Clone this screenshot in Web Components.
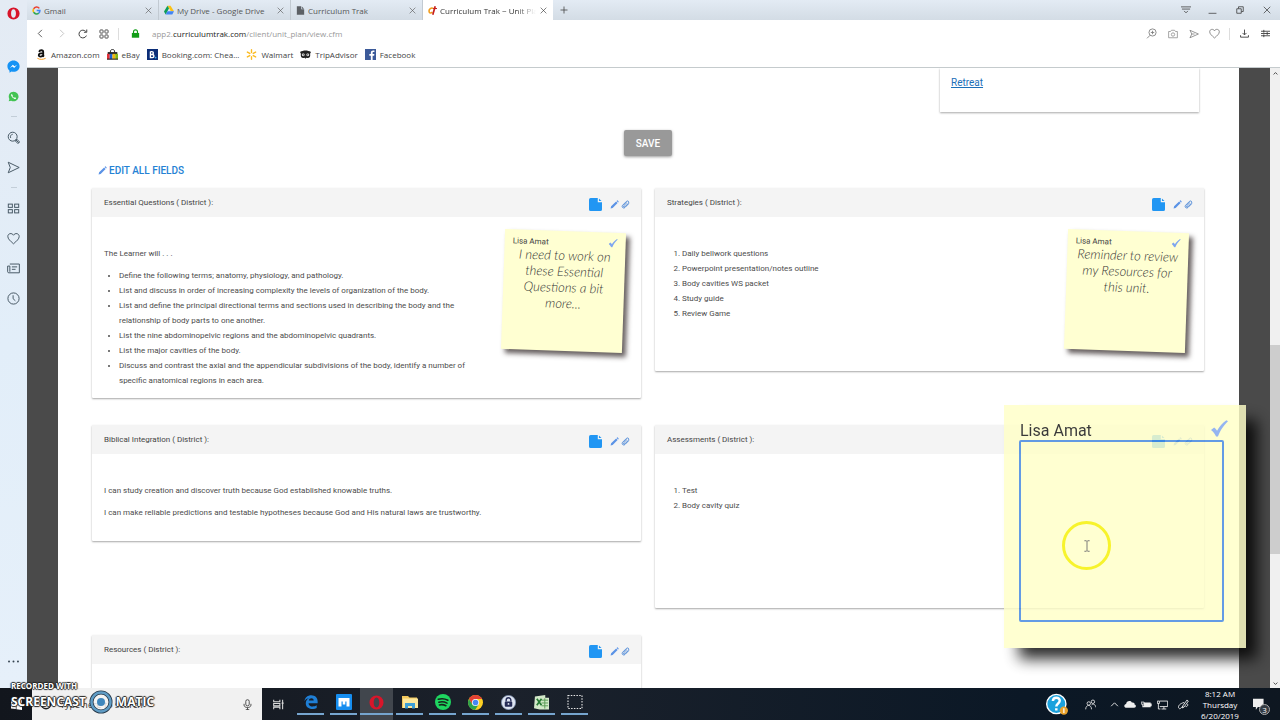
<!DOCTYPE html>
<html lang="en">
<head>
<meta charset="utf-8">
<title>Curriculum Trak ~ Unit Planner</title>
<style>
  html, body {
    height: 100%;
  }

  body {
    margin: 0;
    overflow: hidden;
    font-family: "Open Sans", "Noto Sans", sans-serif;
    font-size: 8px;
    color: #444;
  }
</style>
</head>
<body>
<desktop-screen></desktop-screen>

<script>
(function () {
  const icons = {
    opera: '<path fill="#d8152a" fill-rule="evenodd" d="M8 .5a7.5 7.5 0 1 0 0 15 7.5 7.5 0 0 0 0-15zm0 2.2c2 0 3 2.300 3 5.300s-1 5.300-3 5.300S5 11 5 8s1-5.300 3-5.300z"/>',
    messenger: '<path fill="#1593f5" d="M8 .6C3.700.6.5 3.700.5 7.700c0 2.200 1 4.100 2.600 5.400v2.500l2.400-1.300c.8.2 1.600.3 2.500.3 4.300 0 7.500-3 7.500-7S12.300.6 8 .6z"/><path fill="#fff" d="M3.500 9.800l3.700-4 2 1.900 3.300-1.900-3.700 4-2-1.900z"/>',
    whatsapp: '<path fill="#42c352" d="M8 1a7 7 0 0 0-6 10.500L1 15l3.700-1A7 7 0 1 0 8 1z"/><path fill="#fff" d="M5.600 4.300c-1 .3-1.400 1.500-.8 2.700 1 2.200 2.600 3.700 4.800 4.500 1.100.3 2-.4 2.200-1.400L10 9l-.9.900C8 9.400 7 8.500 6.400 7.200l.7-.8z"/>',
    find: '<g fill="none" stroke="#465764" stroke-width="1.200"><circle cx="7" cy="7" r="5.500"/><path d="M4.500 8.500A3.200 3.200 0 0 1 7 4M11 11l3.500 3.500M10 12l2-2 3.500 3.500-2 2z"/></g>',
    send: '<path fill="none" stroke="#465764" stroke-width="1.200" stroke-linejoin="round" d="M1.500 1.500L15 8 1.500 14.500 4 8z"/>',
    dial: '<g fill="none" stroke="#465764" stroke-width="1.200"><rect x="1.600" y="2.600" width="5" height="4"/><rect x="9.400" y="2.600" width="5" height="4"/><rect x="1.600" y="9.400" width="5" height="4"/><rect x="9.400" y="9.400" width="5" height="4"/></g>',
    heart: '<path fill="none" stroke="currentColor" stroke-width="1.200" d="M8 14.500C4 11 1 8.500 1 5.400 1 1.800 6 .5 8 4c2-3.500 7-2.200 7 1.400 0 3.100-3 5.600-7 9.100z"/>',
    news: '<path fill="none" stroke="#465764" stroke-width="1.200" d="M3.500 2.500h11.700v10.800H2.200C1.300 13.300.8 12.600.8 12V5h2.700v7M6 6h6.500M6 9h4.500"/>',
    clock: '<g fill="none" stroke="#465764" stroke-width="1.200"><circle cx="8" cy="8" r="6.900"/><path d="M7.500 4v4.300l2.800 2.500"/></g>',
    more: '<g fill="#354450"><circle cx="2.500" cy="8" r="1.200"/><circle cx="8" cy="8" r="1.200"/><circle cx="13.500" cy="8" r="1.200"/></g>',
    google: '<g fill="none" stroke-width="2.800"><path stroke="#ea4335" d="M13 4.200A6 6 0 0 0 2.900 5"/><path stroke="#fbbc05" d="M2.900 5a6 6 0 0 0 0 6"/><path stroke="#34a853" d="M2.900 11a6 6 0 0 0 9.100 1.700"/><path stroke="#4285f4" d="M12 12.700A6 6 0 0 0 14 8H8.300"/></g>',
    drive: '<path fill="#fbc215" d="M5.500 1h5L16 10h-5z"/><path fill="#0c9d58" d="M5.500 1L8 5.300 2.700 15 0 10.400z"/><path fill="#4285f4" d="M5.500 10H16l-2.700 5H2.700z"/>',
    page: '<path fill="#5c6065" d="M1.500.5h7.700v5.300h5.300v9.700h-13z"/><path fill="#5c6065" d="M10.300.8l4 4h-4z"/>',
    trak: '<path fill="none" stroke="#f09a1a" stroke-width="2.800" d="M9.500 4.200C5.500 2.200 1.800 5.500 1.800 9c0 3.800 3.200 4.500 6 2"/><path fill="none" stroke="#c61f1f" stroke-width="3" d="M12.800.5L8.500 15.500"/><path stroke="#c61f1f" stroke-width="1.800" d="M9 4.500h7"/>',
    close: '<path fill="none" stroke="currentColor" stroke-width="1.400" d="M1.500 1.500l13 13M14.500 1.500l-13 13"/>',
    plus: '<path stroke="#444" stroke-width="1.600" d="M8 1v14M1 8h14"/>',
    tabmenu: '<path fill="none" stroke="#444" stroke-width="1.300" d="M0 3h16M1.500 6.500h13M5 9.500l3 3 3-3"/>',
    minimise: '<path stroke="#444" stroke-width="1.400" d="M1 13h14"/>',
    restore: '<path fill="none" stroke="#333" stroke-width="1.500" d="M1.500 5.500h9v9h-9zM5 5V1.500h9.500V11H11"/>',
    back: '<path fill="none" stroke="#444" stroke-width="1.500" d="M10.500 1.500L4 8l6.500 6.500"/>',
    forward: '<path fill="none" stroke="#bbb" stroke-width="1.500" d="M5.500 1.500L12 8l-6.500 6.500"/>',
    reload: '<path fill="none" stroke="#444" stroke-width="1.600" d="M13.500 10.500A6.200 6.200 0 1 1 12.500 4M14 .8v4.400H9.500"/>',
    speed: '<g fill="none" stroke="#444" stroke-width="1.500"><rect x="1.500" y="1.500" width="5" height="5" rx="1"/><rect x="9.500" y="1.500" width="5" height="5" rx="1"/><rect x="1.500" y="9.500" width="5" height="5" rx="1"/><rect x="9.500" y="9.500" width="5" height="5" rx="1"/></g>',
    lock: '<path fill="#119d16" d="M1.500 7h13v8.500h-13z"/><path fill="none" stroke="#119d16" stroke-width="2" d="M4.500 7V5a3.500 3.500 0 0 1 7 0v2"/>',
    zoom: '<g fill="none" stroke="#777" stroke-width="1.200"><circle cx="9.500" cy="6.500" r="5.200"/><path d="M6 10.500L1.500 15M7 6.500h5M9.500 4v5"/></g>',
    camera: '<g fill="none" stroke="#888" stroke-width="1.200"><path d="M1 4h3l1.500-2h5L12 4h3v10H1z"/><circle cx="8" cy="8.800" r="2.700"/></g>',
    plane: '<path fill="none" stroke="#777" stroke-width="1.200" d="M1.500 2L15 8 1.500 14l3-6zM4.500 8H9"/>',
    download: '<path fill="none" stroke="#333" stroke-width="1.500" d="M8 1v9M4.500 7L8 10.500 11.500 7M1 11v3.500h14V11"/>',
    tune: '<path fill="none" stroke="#333" stroke-width="1.500" d="M0 4h16M0 8h16M0 12h16M5 1.500v5M11 5.500v5M5 9.500v5"/>',
    amazon: '<path fill="none" stroke="#111" stroke-width="2.600" d="M4.500 4.200C5.500 1 10.500 1 10.500 4.500V9c0 1 .5 1.500 1.200 2M10.500 6C6 6 4 7 4 9c0 3 5.500 2.500 6.500-.5"/><path fill="none" stroke="#f79a1c" stroke-width="1.400" d="M2 13.500c4 2.200 8 2 12 0"/>',
    ebay: '<path fill="none" stroke="#222" stroke-width="1.400" d="M5 5V3c0-3 6-3 6 0v2"/><path fill="#222" d="M1 4.500h14V8H1z"/><path fill="#e43137" d="M0 7h4v8H0z"/><path fill="#1d62d1" d="M4 7h4v8H4z"/><path fill="#f3b50d" d="M8 7h4v8H8z"/><path fill="#85b716" d="M12 7h4v8h-4z"/><path fill="#222" d="M0 14h16v1.500H0z"/>',
    booking: '<rect width="16" height="16" fill="#0b2d77"/><path fill="none" stroke="#fff" stroke-width="2" d="M5 3.500v9h2.500c3.500 0 3.500-4.500 0-4.500H5h2c3 0 3-4.200 0-4.200H5"/><circle cx="12.500" cy="12.500" r="1.300" fill="#3bb6f2"/>',
    walmart: '<path stroke="#fbbb22" stroke-width="2" stroke-linecap="round" d="M8 1v4M8 11v4M2 4.500l3.500 2M10.500 9.500l3.500 2M2 11.500l3.500-2M10.500 6.500l3.500-2"/>',
    trip: '<path fill="#222" d="M0 4.500C5 1.500 11 1.500 16 4.500l-1.200 2V10a3.700 3.700 0 0 1-5.500 2.600L8 14l-1.300-1.400A3.700 3.700 0 0 1 1.200 10V6.500z"/><circle cx="4.700" cy="8.500" r="2" fill="#fff"/><circle cx="11.300" cy="8.500" r="2" fill="#fff"/><circle cx="4.700" cy="8.500" r=".9"/><circle cx="11.300" cy="8.500" r=".9"/>',
    facebook: '<rect width="16" height="16" fill="#3c5a99"/><path fill="#fff" d="M8.500 16V9.800H6.300V7.300h2.200V5.500c0-2.200 1.300-3.400 3.300-3.400l1.900.1v2.300h-1.300c-1 0-1.300.5-1.300 1.200v1.600h2.500l-.3 2.500h-2.200V16z"/>',
    sticky: '<path fill="#2196f3" d="M2 0h8.800v5.200H16V14a2 2 0 0 1-2 2H2a2 2 0 0 1-2-2V2a2 2 0 0 1 2-2z"/><path fill="#2196f3" d="M12.200.6l3.200 3.200h-3.200z"/>',
    pencil: '<path fill="#5b93e6" d="M1 15l1-3.700 8.800-8.800 2.700 2.700L4.700 14zM11.700 1.600l.9-.9c.7-.7 3.400 2 2.700 2.700l-.9.900z"/>',
    clip: '<path fill="none" stroke="#4a86d6" stroke-width="1.700" d="M13.800 6.500l-6.500 6.600C4 16 .2 12.300 3 9.200l6.600-6.700c2.500-2.200 5.700.8 3.500 3.300l-6.200 6.300c-1.500 1.200-3.200-.4-2-2L10.500 4.500"/>',
    check: '<path fill="#7ea6ef" d="M0 9.500l3-2.500c1.200.8 2 1.800 2.700 3C8 6 10.500 3 14.500.2L16 1.200C11.500 5.500 9 9.500 6.500 15.500H4.800C3.500 12.800 2 11 0 9.500z"/>',
    ibeam: '<path fill="none" stroke="#777" stroke-width="1.300" d="M4.500 1h2.700L8 2l.8-1h2.700M8 2v12M4.500 15h2.700L8 14l.8 1h2.700"/>',
    up: '<path fill="none" stroke="#444" stroke-width="3" d="M2 11l6-6 6 6"/>',
    down: '<path fill="none" stroke="#444" stroke-width="3" d="M2 5l6 6 6-6"/>',
    windows: '<path fill="#fff" d="M0 2.300L7 1.300V7.500H0zM8 1.200L16 0v7.500H8zM0 8.500h7v6.200l-7-1zM8 8.500h8V16l-8-1.200z"/>',
    cortana: '<circle cx="8" cy="8" r="6.300" fill="none" stroke="#222" stroke-width="2"/>',
    mic: '<rect x="5.500" y="1" width="5" height="9" rx="2.500" fill="none" stroke="#333" stroke-width="1.200"/><path fill="none" stroke="#333" stroke-width="1.200" d="M3 7v2c0 4.500 10 4.500 10 0V7M8 12.500V15.500M5.500 15.500h5"/>',
    taskview: '<path fill="none" stroke="#ddd" stroke-width="1.500" d="M1 1v3h9V1M1 15v-3h9v3M1 6.500h9v3.500H1zM14 1v14M12.500 6h3"/>',
    edge: '<path fill="#1f7fd6" d="M.5 7C1.300 2.700 4.300.3 8.300.3c4.700 0 7.300 3.200 7.300 7v2H5.200c0 4.300 6 4.800 9.300 2.500v3c-5.500 2.900-12.500.7-12.500-5.300 0-3 1.800-5 4-6C3.500 4 1.500 5.200.5 7zm5-.6h5.600C11.100 2.700 6 2.700 5.500 6.400z"/>',
    maxthon: '<rect width="16" height="16" rx="1" fill="#168ef0"/><path fill="#fff" d="M2.500 4h11v8.500h-3V7.500H9.300v3H6.700v-3H5.500v5h-3z"/>',
    explorer: '<path fill="#f1c75c" d="M0 2h6l1.500 1.500H15V14H0z"/><path fill="#fce79c" d="M1 4.500h15V14H1z"/><path fill="#3d9fd6" d="M3 14.500V9h10v5.500h-3V12H6v2.500z"/>',
    spotify: '<circle cx="8" cy="8" r="8" fill="#1ed760"/><path fill="none" stroke="#17251c" stroke-width="1.600" stroke-linecap="round" d="M3.300 5.300c3.400-1 6.700-.6 9.600.9M3.900 8.200c2.800-.8 5.600-.4 8.100.9M4.400 10.900c2.200-.6 4.500-.3 6.500.8"/>',
    chrome: '<circle cx="8" cy="8" r="8" fill="#fdd023"/><path fill="#e44134" d="M1 4.200A8 8 0 0 1 15 4.200H8L4.600 10z"/><path fill="#2ba24c" d="M1 4.200A8 8 0 0 0 7.500 16L11.400 10 4.600 10z"/><circle cx="8" cy="8" r="3.800" fill="#fff"/><circle cx="8" cy="8" r="3" fill="#4587f3"/>',
    keylock: '<circle cx="8" cy="8" r="7.600" fill="#dfe6f2" stroke="#7c8eae" stroke-width=".8"/><rect x="4" y="7" width="8" height="5.500" rx="1" fill="#262c56"/><path fill="none" stroke="#262c56" stroke-width="1.500" d="M5.500 7V5.500a2.500 2.500 0 0 1 5 0V7"/><circle cx="8" cy="9.500" r="1" fill="#dfe6f2"/>',
    excel: '<path fill="#d3e9c9" d="M1 1.500L12 0v3h4v12.500H6L0 14z"/><path stroke="#5a9c55" fill="none" d="M8 5.500h7M8 8.500h7M8 11.500h7M11.500 3.500v11"/><path fill="none" stroke="#277b34" stroke-width="1.800" d="M3 4l5 7M8 4l-5 7"/>',
    region: '<rect x="1" y="1.500" width="14" height="13" fill="none" stroke="#e8e8e8" stroke-width="1.100" stroke-dasharray="1.500 1.300"/>',
    help: '<circle cx="7.500" cy="8" r="7" fill="#1ba1dd" stroke="#fff" stroke-width="1"/><path fill="none" stroke="#fff" stroke-width="1.800" d="M5 5.800C5.200 2.700 10 2.800 10 5.700c0 2-2.500 1.900-2.500 4.200M7.500 11v1.800"/><circle cx="13" cy="12.800" r="3" fill="#e9a22c"/><path stroke="#fff" stroke-width=".9" d="M13 11v3.600"/>',
    people: '<g fill="none" stroke="#eee" stroke-width="1.200"><circle cx="5.500" cy="6.500" r="2.500"/><circle cx="11.500" cy="4" r="2.500"/><path d="M1 15c0-7.500 8.500-7.500 8.500 0M9.500 8.500c3-2.500 6 0 6 3.500"/></g>',
    chevron: '<path fill="none" stroke="#eee" stroke-width="1.600" d="M2 11l6-6 6 6"/>',
    cloud: '<path fill="#eee" d="M3.500 13C-.5 13-.5 8.500 2.800 8 3 4 8.500 2.500 10.500 6c3-.7 4 1.500 3.500 2.500 2.700.5 2.500 4.500-.5 4.500z"/>',
    battery: '<path fill="#eee" d="M4 5h10v1.500h1.500v4H14V12H3V9.500h1.500z"/><path fill="none" stroke="#eee" stroke-width="1.200" d="M0 4.500h4.500v3h-4zM2.500 7.500V12"/>',
    network: '<path fill="none" stroke="#eee" stroke-width="1.300" d="M4 3h11.500v8H4M10 11v3.500M6.500 14.500h7M.5 3h3v3.500h-3zM2 6.500v8h3"/>',
    pen: '<path fill="none" stroke="#eee" stroke-width="1.300" d="M7 10l6-8.500 2 1.500-6 8.500-3 1.500zM9 5C1 7-1 12 2 14c3 1 3-5 6-2M13 7c3 1 0 5-2 4"/>',
    notify: '<path fill="#eee" d="M0 1h13v10H6l-2.500 3.500V11H0z"/>'
  };

  function define(name, css, html) {
    const template = document.createElement('template');
    template.innerHTML = `<style>* { box-sizing: border-box; } ${css}</style>${html}`;
    customElements.define(name, class extends HTMLElement {
      constructor() {
        super();
        this.attachShadow({ mode: 'open' }).appendChild(template.content.cloneNode(true));
      }
    });
  }

  customElements.define('ui-icon', class extends HTMLElement {
    static get observedAttributes() {
      return ['name', 'size'];
    }

    constructor() {
      super();
      this.attachShadow({ mode: 'open' });
    }

    attributeChangedCallback() {
      const size = this.getAttribute('size') || 10;
      this.shadowRoot.innerHTML = `
        <style>
          :host { display: inline-flex; flex: none; }
          svg { display: block; width: ${size}px; height: ${size}px; }
        </style>
        <svg viewBox="0 0 16 16" aria-hidden="true">${icons[this.getAttribute('name')] || ''}</svg>`;
    }
  });

  /* Browser chrome */

  const plainButton = `
    button {
      display: flex;
      align-items: center;
      justify-content: center;
      padding: 0;
      border: 0;
      background: none;
      color: inherit;
      font: inherit;
    }`;

  define('side-bar', `
    :host {
      display: flex;
      flex-direction: column;
      align-items: center;
      background: linear-gradient(#e4ebf4, #e2eef9 50%, #e6f0fa);
      color: #465764;
    }
    ${plainButton}
    button { width: 27px; height: 30px; }
    .logo { height: 27px; margin-bottom: 24px; }
    hr { width: 6px; margin: 5px 0; border: 0; border-top: 1px solid #c3ced8; }
    .more { margin-top: auto; margin-bottom: 12px; }
  `, `
    <button class="logo" aria-label="Opera menu"><ui-icon name="opera" size="13"></ui-icon></button>
    <button aria-label="Messenger"><ui-icon name="messenger" size="13"></ui-icon></button>
    <button aria-label="WhatsApp"><ui-icon name="whatsapp" size="11"></ui-icon></button>
    <hr>
    <button aria-label="Search"><ui-icon name="find" size="13"></ui-icon></button>
    <button aria-label="My Flow"><ui-icon name="send" size="13"></ui-icon></button>
    <hr>
    <button aria-label="Speed Dial"><ui-icon name="dial" size="13"></ui-icon></button>
    <button aria-label="Bookmarks"><ui-icon name="heart" size="13"></ui-icon></button>
    <button aria-label="News"><ui-icon name="news" size="13"></ui-icon></button>
    <button aria-label="History"><ui-icon name="clock" size="13"></ui-icon></button>
    <button class="more" aria-label="More"><ui-icon name="more" size="13"></ui-icon></button>
  `);

  define('browser-tab', `
    :host {
      display: flex;
      align-items: center;
      gap: 3px;
      width: 132px;
      padding: 0 6px 0 5px;
      border-right: 1px solid #c2cad2;
      color: #555;
    }
    :host([active]) { background: #fff; border: 0; color: #333; width: 130px; }
    ${plainButton}
    span { flex: 1; overflow: hidden; white-space: nowrap; }
    :host([active]) span {
      -webkit-mask-image: linear-gradient(90deg, #000 80%, transparent);
      mask-image: linear-gradient(90deg, #000 80%, transparent);
    }
    button { width: 8px; height: 12px; }
  `, `
    <slot name="icon"></slot>
    <span><slot></slot></span>
    <button aria-label="Close tab"><ui-icon name="close" size="7"></ui-icon></button>
  `);

  define('tab-strip', `
    :host {
      display: flex;
      height: 20px;
      background: linear-gradient(#e3ebf4, #d3dce5);
    }
    ${plainButton}
    .add { width: 22px; }
    .controls { display: flex; margin-left: auto; color: #333; }
    .controls button { width: 27px; }
  `, `
    <slot></slot>
    <button class="add" aria-label="New tab"><ui-icon name="plus" size="8"></ui-icon></button>
    <div class="controls">
      <button aria-label="Tab menu"><ui-icon name="tabmenu" size="10"></ui-icon></button>
      <button aria-label="Minimise"><ui-icon name="minimise" size="9"></ui-icon></button>
      <button aria-label="Restore"><ui-icon name="restore" size="8"></ui-icon></button>
      <button aria-label="Close"><ui-icon name="close" size="8"></ui-icon></button>
    </div>
  `);

  define('address-bar', `
    :host {
      display: flex;
      align-items: center;
      height: 27px;
      padding: 0 4px 0 3px;
      background: #fff;
      color: #777;
    }
    ${plainButton}
    button { width: 21px; height: 21px; }
    i { width: 1px; height: 12px; margin: 0 4px; background: #ddd; }
    .lock { margin: 0 12px 0 8px; }
    .url { flex: 1; color: #999; }
    .url b { font-weight: 400; color: #222; }
  `, `
    <button aria-label="Back"><ui-icon name="back" size="9"></ui-icon></button>
    <button aria-label="Forward"><ui-icon name="forward" size="9"></ui-icon></button>
    <button aria-label="Reload"><ui-icon name="reload" size="10"></ui-icon></button>
    <button aria-label="Speed Dial"><ui-icon name="speed" size="10"></ui-icon></button>
    <i></i>
    <ui-icon class="lock" name="lock" size="9"></ui-icon>
    <span class="url">app2.<b>curriculumtrak.com</b>/client/unit_plan/view.cfm</span>
    <button aria-label="Zoom"><ui-icon name="zoom" size="11"></ui-icon></button>
    <button aria-label="Snapshot"><ui-icon name="camera" size="10"></ui-icon></button>
    <button aria-label="Send"><ui-icon name="plane" size="10"></ui-icon></button>
    <button aria-label="Bookmark"><ui-icon name="heart" size="11"></ui-icon></button>
    <i></i>
    <button aria-label="Downloads"><ui-icon name="download" size="9"></ui-icon></button>
    <button aria-label="Easy setup"><ui-icon name="tune" size="9"></ui-icon></button>
  `);

  define('bookmark-bar', `
    :host {
      display: flex;
      align-items: center;
      gap: 7px;
      height: 21px;
      padding: 0 9px 6px;
      border-bottom: 1px solid #c5cbcd;
      background: #fff;
    }
    a {
      display: flex;
      align-items: center;
      gap: 4px;
      color: #444;
      text-decoration: none;
      white-space: nowrap;
    }
  `, `
    <a href="#amazon"><ui-icon name="amazon" size="11"></ui-icon>Amazon.com</a>
    <a href="#ebay"><ui-icon name="ebay" size="11"></ui-icon>eBay</a>
    <a href="#booking"><ui-icon name="booking" size="11"></ui-icon>Booking.com: Chea...</a>
    <a href="#walmart"><ui-icon name="walmart" size="11"></ui-icon>Walmart</a>
    <a href="#tripadvisor"><ui-icon name="trip" size="11"></ui-icon>TripAdvisor</a>
    <a href="#facebook"><ui-icon name="facebook" size="11"></ui-icon>Facebook</a>
  `);

  define('scroll-bar', `
    :host {
      display: grid;
      grid-template-rows: 10px 267fr 209fr 124fr 10px;
      justify-items: stretch;
      width: 10px;
      background: #f0f0f0;
    }
    ui-icon { justify-self: center; align-self: center; }
    .thumb { grid-row: 3; background: #cdcdcd; }
    .end { grid-row: 5; }
  `, `
    <ui-icon name="up" size="5"></ui-icon>
    <div class="thumb"></div>
    <ui-icon class="end" name="down" size="5"></ui-icon>
  `);

  /* Unit plan page */

  define('unit-card', `
    :host {
      display: block;
      background: #fff;
      border-radius: 1px;
      box-shadow: 0 1px 2px rgba(0, 0, 0, .35);
    }
    header {
      display: flex;
      align-items: center;
      height: 29px;
      padding: 0 10px 0 12px;
      background: #f4f4f4;
      color: #444;
    }
    h2 { flex: 1; margin: 0; font: inherit; }
    ${plainButton}
    button { height: 14px; padding: 0 1px; }
    header button:first-of-type { margin-right: 6px; }
    .tools { display: flex; align-items: center; padding-top: 4px; }
    .body { display: flex; min-height: 87px; }
    :host([tall]) .body { min-height: 154px; }
    .text { flex: 1; padding: 29px 11px 10px 12px; }
    ::slotted(sticky-note) { margin: 14px 17px 20px 0; }
  `, `
    <header>
      <h2><slot name="title"></slot></h2>
      <div class="tools">
        <button aria-label="Add note"><ui-icon name="sticky" size="13"></ui-icon></button>
        <button aria-label="Edit"><ui-icon name="pencil" size="9"></ui-icon></button>
        <button aria-label="Attach"><ui-icon name="clip" size="9"></ui-icon></button>
      </div>
    </header>
    <div class="body">
      <div class="text"><slot></slot></div>
      <slot name="note"></slot>
    </div>
  `);

  define('sticky-note', `
    :host {
      display: block;
      flex: none;
      width: 121px;
      height: 120px;
      padding: 6px 8px;
      background: #ffffd2;
      box-shadow: 4px 4px 5px rgba(40, 30, 30, .7);
      transform: rotate(2deg);
    }
    .top { display: flex; justify-content: space-between; height: 10px; line-height: 12px; color: #444; }
    p {
      margin: 0;
      font: italic 300 13px/16px Lato, sans-serif;
      color: #333;
      text-align: center;
    }
  `, `
    <div class="top"><slot name="author"></slot><ui-icon name="check" size="9"></ui-icon></div>
    <p><slot></slot></p>
  `);

  define('note-editor', `
    :host {
      display: flex;
      flex-direction: column;
      width: 242px;
      height: 243px;
      padding: 15px 22px 26px 15px;
      background: #ffffc8;
      box-shadow: 13px 13px 14px -2px #000;
      opacity: .82;
      color: #111;
      font-size: 16px;
    }
    .top { display: flex; justify-content: space-between; height: 20px; margin-right: -4px; padding-left: 1px; line-height: 22px; }
    textarea {
      flex: 1;
      border: 2px solid #4286e0;
      border-radius: 2px;
      background: none;
      outline: none;
      resize: none;
      font: italic 300 24px/32px Lato, sans-serif;
    }
  `, `
    <div class="top"><label for="note"><slot></slot></label><ui-icon name="check" size="17"></ui-icon></div>
    <textarea id="note"></textarea>
  `);

  define('click-ring', `
    :host {
      display: flex;
      align-items: center;
      justify-content: center;
      width: 49px;
      height: 49px;
      border: 3px solid #f7f32c;
      border-radius: 50%;
    }
  `, `<ui-icon name="ibeam" size="12"></ui-icon>`);

  define('unit-plan', `
    :host {
      display: block;
      position: relative;
      overflow: hidden;
      padding: 0 31px;
      background: #4a4a4a;
      font-family: Roboto, sans-serif;
      font-size: 8px;
      line-height: 15px;
      color: #4c4c4c;
    }
    .sheet { min-height: 100%; padding: 0 35px 0 34px; background: #fff; }
    .links {
      width: 259px;
      height: 44px;
      margin: 0 5px 18px auto;
      padding: 7px 11px;
      box-shadow: 0 1px 2px rgba(0, 0, 0, .35);
      font-size: 10px;
    }
    .links a { color: #1c6fb8; }
    .save {
      display: block;
      width: 48px;
      height: 26px;
      margin: 0 auto;
      padding: 0;
      border: 0;
      border-radius: 2px;
      background: #999;
      box-shadow: 0 1px 3px rgba(0, 0, 0, .4);
      color: #fff;
      font: 500 10px Roboto, sans-serif;
    }
    .edit {
      display: flex;
      align-items: center;
      gap: 2px;
      width: fit-content;
      margin: 7px 0 10px 6px;
      color: #2582d4;
      font-size: 10px;
      font-weight: 500;
      text-decoration: none;
    }
    .cards {
      display: grid;
      grid-template-columns: 1fr 1fr;
      gap: 27px 14px;
      align-items: start;
    }
    p { margin: 0 0 7px; }
    ul, ol { margin: 0; padding-left: 15px; }
    note-editor { position: absolute; top: 337px; right: 24px; }
    click-ring { position: absolute; top: 453px; right: 159px; }
  `, `
    <div class="sheet">
      <div class="links"><a href="#retreat">Retreat</a></div>
      <button class="save">SAVE</button>
      <a class="edit" href="#edit"><ui-icon name="pencil" size="9"></ui-icon>EDIT ALL FIELDS</a>
      <div class="cards">
        <unit-card>
          <span slot="title">Essential Questions ( District ):</span>
          <p>The Learner will . . .</p>
          <ul>
            <li>Define the following terms; anatomy, physiology, and pathology.</li>
            <li>List and discuss in order of increasing complexity the levels of organization of the body.</li>
            <li>List and define the principal directional terms and sections used in describing the body and the relationship of body parts to one another.</li>
            <li>List the nine abdominopelvic regions and the abdominopelvic quadrants.</li>
            <li>List the major cavities of the body.</li>
            <li>Discuss and contrast the axial and the appendicular subdivisions of the body, identify a number of specific anatomical regions in each area.</li>
          </ul>
          <sticky-note slot="note"><span slot="author">Lisa Amat</span>I need to work on these Essential Questions a bit more...</sticky-note>
        </unit-card>
        <unit-card>
          <span slot="title">Strategies ( District ):</span>
          <ol>
            <li>Daily bellwork questions</li>
            <li>Powerpoint presentation/notes outline</li>
            <li>Body cavities WS packet</li>
            <li>Study guide</li>
            <li>Review Game</li>
          </ol>
          <sticky-note slot="note"><span slot="author">Lisa Amat</span>Reminder to review my Resources for this unit.</sticky-note>
        </unit-card>
        <unit-card>
          <span slot="title">Biblical Integration ( District ):</span>
          <p>I can study creation and discover truth because God established knowable truths.</p>
          <p>I can make reliable predictions and testable hypotheses because God and His natural laws are trustworthy.</p>
        </unit-card>
        <unit-card tall>
          <span slot="title">Assessments ( District ):</span>
          <ol>
            <li>Test</li>
            <li>Body cavity quiz</li>
          </ol>
        </unit-card>
        <unit-card>
          <span slot="title">Resources ( District ):</span>
        </unit-card>
      </div>
    </div>
    <note-editor>Lisa Amat</note-editor>
    <click-ring></click-ring>
  `);

  /* Windows task bar */

  define('task-bar', `
    :host {
      display: flex;
      height: 32px;
      background: linear-gradient(90deg, #12161d, #1b212b 40%, #0b1826 80%, #0e1721);
      color: #fff;
    }
    ${plainButton}
    .start, .view { width: 32px; }
    .search {
      display: flex;
      align-items: center;
      gap: 8px;
      width: 230px;
      padding: 0 9px 0 8px;
      background: #f1f1f1;
    }
    input {
      flex: 1;
      min-width: 0;
      padding: 0;
      border: 0;
      background: none;
      font: 9px "Open Sans", sans-serif;
    }
    input::placeholder { color: #333; }
    .apps button { width: 33px; position: relative; }
    .apps, .tray { display: flex; }
    .apps button::after {
      content: "";
      position: absolute;
      left: 3px;
      right: 3px;
      bottom: 5px;
      height: 2px;
      background: #76a5cf;
    }
    .apps .on { background: #41464d; }
    .apps .on::after { left: 0; right: 0; }
    .apps button { padding-bottom: 4px; }
    .tray { margin-left: auto; align-items: center; padding-right: 8px; }
    .tray button { width: 16px; height: 32px; }
    .tray .help { width: 34px; }
    .tray .people { width: 32px; }
    .tray .wide { width: 26px; }
    time { width: 48px; font-size: 8px; line-height: 11px; text-align: center; }
    .notify { position: relative; margin-left: 2px; }
    .notify span {
      position: absolute;
      right: 2px;
      bottom: 5px;
      width: 11px;
      height: 11px;
      border: 1px solid #aaa;
      border-radius: 50%;
      background: #333a42;
      font-size: 8px;
      line-height: 9px;
    }
  `, `
    <button class="start" aria-label="Start"><ui-icon name="windows" size="11"></ui-icon></button>
    <label class="search">
      <ui-icon name="cortana" size="12"></ui-icon>
      <input type="text" aria-label="Search" placeholder="Type here to search">
      <ui-icon name="mic" size="11"></ui-icon>
    </label>
    <button class="view" aria-label="Task view"><ui-icon name="taskview" size="11"></ui-icon></button>
    <div class="apps">
      <button aria-label="Edge"><ui-icon name="edge" size="14"></ui-icon></button>
      <button aria-label="Maxthon"><ui-icon name="maxthon" size="16"></ui-icon></button>
      <button class="on" aria-label="Opera"><ui-icon name="opera" size="15"></ui-icon></button>
      <button aria-label="File Explorer"><ui-icon name="explorer" size="16"></ui-icon></button>
      <button aria-label="Spotify"><ui-icon name="spotify" size="16"></ui-icon></button>
      <button aria-label="Chrome"><ui-icon name="chrome" size="15"></ui-icon></button>
      <button aria-label="Password manager"><ui-icon name="keylock" size="15"></ui-icon></button>
      <button aria-label="Excel"><ui-icon name="excel" size="15"></ui-icon></button>
      <button aria-label="Recorder"><ui-icon name="region" size="16"></ui-icon></button>
    </div>
    <div class="tray">
      <button class="help" aria-label="Help"><ui-icon name="help" size="22"></ui-icon></button>
      <button class="people" aria-label="People"><ui-icon name="people" size="11"></ui-icon></button>
      <button aria-label="Hidden icons"><ui-icon name="chevron" size="9"></ui-icon></button>
      <button aria-label="OneDrive"><ui-icon name="cloud" size="12"></ui-icon></button>
      <button aria-label="Battery"><ui-icon name="battery" size="11"></ui-icon></button>
      <button aria-label="Network"><ui-icon name="network" size="11"></ui-icon></button>
      <button class="wide" aria-label="Ink workspace"><ui-icon name="pen" size="11"></ui-icon></button>
      <time>8:12 AM<br>Thursday<br>6/20/2019</time>
      <button class="wide notify" aria-label="Notifications"><ui-icon name="notify" size="13"></ui-icon><span>3</span></button>
    </div>
  `);

  define('recorder-mark', `
    :host {
      display: block;
      color: #fff;
      font-family: "Open Sans", sans-serif;
      font-weight: 700;
      text-shadow: 1px 0 1px #222, -1px 0 1px #222, 0 1px 1px #222, 0 -1px 1px #222;
      white-space: nowrap;
    }
    small { display: block; font-size: 8px; line-height: 8px; }
    div { display: flex; align-items: center; gap: 3px; font-size: 12px; line-height: 22px; }
    svg { width: 24px; height: 24px; }
  `, `
    <small>RECORDED WITH</small>
    <div>
      <span>SCREENCAST</span>
      <svg viewBox="0 0 24 24" aria-hidden="true">
        <circle cx="12" cy="12" r="9.500" fill="#f5f5f5" fill-opacity=".8" stroke="#27394a" stroke-width="4"/>
        <circle cx="12" cy="12" r="9.500" fill="none" stroke="#5f9cc5" stroke-width="2.400"/>
        <circle cx="12" cy="12" r="4" fill="#3f87bd"/>
      </svg>
      <span>MATIC</span>
    </div>
  `);

  define('desktop-screen', `
    :host {
      display: grid;
      grid-template: minmax(0, 1fr) auto / 27px minmax(0, 1fr);
      height: 100vh;
      position: relative;
    }
    .window { display: flex; flex-direction: column; min-height: 0; }
    .view { flex: 1; display: flex; min-height: 0; }
    unit-plan { flex: 1; }
    task-bar { grid-column: 1 / -1; }
    recorder-mark { position: absolute; left: 11px; bottom: 6px; }
  `, `
    <side-bar></side-bar>
    <div class="window">
      <tab-strip>
        <browser-tab><ui-icon slot="icon" name="google" size="9"></ui-icon>Gmail</browser-tab>
        <browser-tab><ui-icon slot="icon" name="drive" size="10"></ui-icon>My Drive - Google Drive</browser-tab>
        <browser-tab><ui-icon slot="icon" name="page" size="9"></ui-icon>Curriculum Trak</browser-tab>
        <browser-tab active><ui-icon slot="icon" name="trak" size="9"></ui-icon>Curriculum Trak ~ Unit Planner</browser-tab>
      </tab-strip>
      <address-bar></address-bar>
      <bookmark-bar></bookmark-bar>
      <div class="view">
        <unit-plan></unit-plan>
        <scroll-bar></scroll-bar>
      </div>
    </div>
    <task-bar></task-bar>
    <recorder-mark></recorder-mark>
  `);
})();
</script>
</body>
</html>
